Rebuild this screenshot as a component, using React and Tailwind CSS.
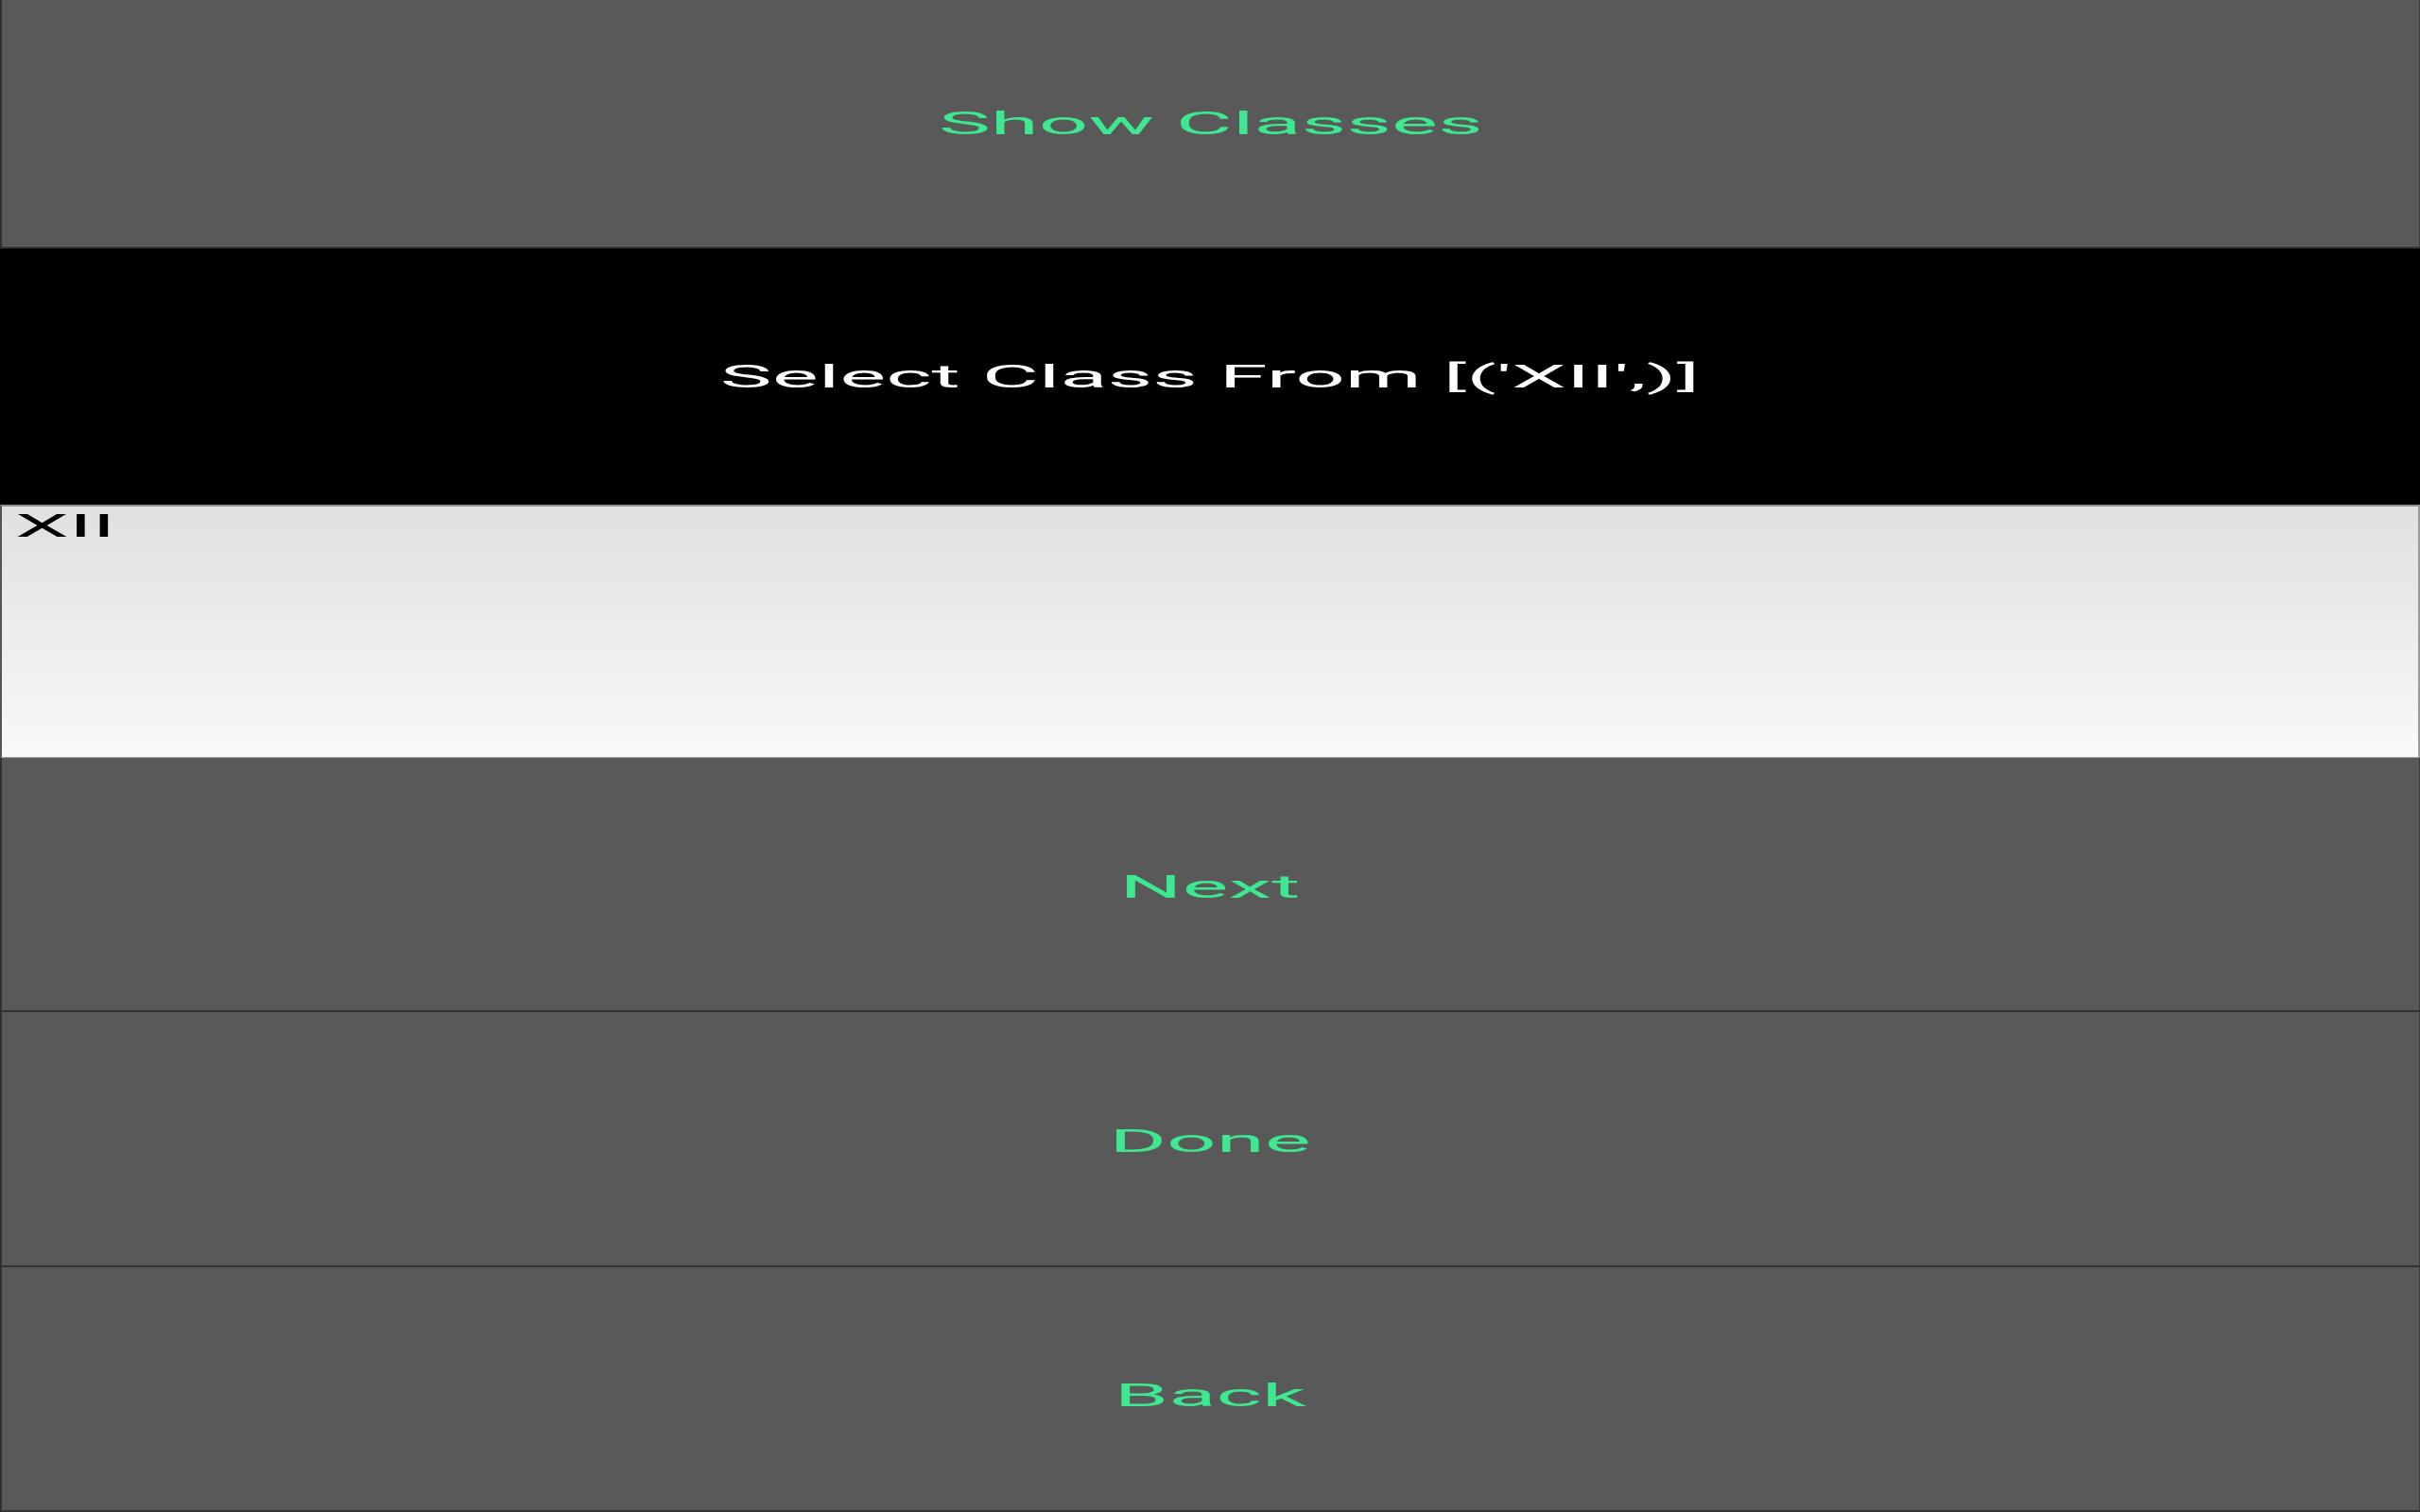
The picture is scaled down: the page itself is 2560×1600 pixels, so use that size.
import React from "react";

const font = { fontFamily: "Roboto, 'Liberation Sans', sans-serif" };

function KivyButton({ label, className }) {
  return (
    <button className={`w-full flex items-center justify-center bg-[#595959] border-l-2 border-l-[#2f2f2f] border-r border-r-[#3a3a3a] border-b-2 border-b-[#333333] ${className}`}>
      <span className="inline-block text-[33px] leading-none text-[#3ee890] scale-x-[2.8]">{label}</span>
    </button>
  );
}

export default function App() {
  return (
    <div className="w-[2560px] h-[1600px] bg-black flex flex-col overflow-hidden" style={font}>
      <KivyButton label="Show Classes" className="h-[263px] shrink-0" />

      {/* label row */}
      <div className="h-[271px] shrink-0 flex items-center justify-center bg-black">
        <span className="inline-block text-[33px] leading-none text-white scale-x-[2.8]">
          Select Class From [('XII',)]
        </span>
      </div>

      {/* text input */}
      <div className="h-[268px] shrink-0 bg-gradient-to-b from-[#e0e0e0] to-[#f9f9f9] border-t-2 border-t-[#8f8f8f] border-l-2 border-l-[#555555] border-r-2 border-r-[#9a9a9a] border-b border-b-[#a0a0a0] pl-[14px] pt-[4px]">
        <span className="inline-block origin-left text-[33px] leading-none text-black scale-x-[2.75]">XII</span>
      </div>

      <KivyButton label="Next" className="h-[269px] shrink-0 pt-[5px]" />
      <KivyButton label="Done" className="h-[270px] shrink-0 pt-[5px]" />
      <KivyButton label="Back" className="flex-1 pt-[14px]" />
    </div>
  );
}
